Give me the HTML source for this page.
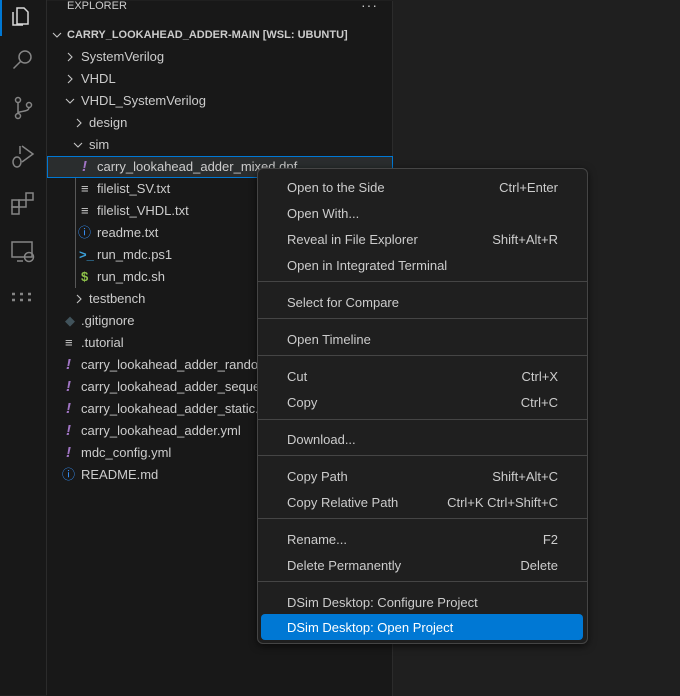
<!DOCTYPE html>
<html><head><meta charset="utf-8"><style>
*{margin:0;padding:0;box-sizing:border-box}
body{width:680px;height:695px;background:#1f1f1f;font-family:"Liberation Sans","Segoe UI",sans-serif;font-size:13px;color:#cccccc;position:relative;overflow:hidden}
#act{position:absolute;left:0;top:0;width:47px;height:695px;background:#181818;border-right:1px solid #2b2b2b}
#side{position:absolute;left:47px;top:1px;width:346px;height:695px;background:#181818;border-right:1px solid #2b2b2b}
.r{position:absolute;height:22px;line-height:22px;white-space:nowrap;color:#cccccc}
.chev{position:absolute;width:10px;height:10px}
#menu{position:absolute;left:257px;top:168px;width:331px;height:476px;background:#1f1f1f;border:1px solid #454545;border-radius:6px;box-shadow:0 2px 8px rgba(0,0,0,.6)}
.mi{position:absolute;left:29px;right:29px;height:26px;line-height:26px;color:#cccccc;top:1px}
.mi span{position:absolute;right:0}
.sep{position:absolute;left:0;right:0;height:1px;background:#454545}
.y{color:#a074c4;font-weight:bold;font-style:italic;font-size:15px}
</style></head><body>
<svg width="0" height="0" style="position:absolute"><defs>
<symbol id="cr" viewBox="0 0 10 10"><path d="M3 1l4 4-4 4" fill="none" stroke="#c5c5c5" stroke-width="1.1"/></symbol>
<symbol id="cd" viewBox="0 0 10 10"><path d="M1 3l4 4 4-4" fill="none" stroke="#c5c5c5" stroke-width="1.1"/></symbol>
</defs></svg>
<div id="act">
<div style="position:absolute;left:0;top:0;width:2px;height:36px;background:#0078d4"></div>
<svg width="47" height="320" style="position:absolute;left:0;top:0" fill="none" stroke="#858585" stroke-width="1.5">
<g stroke="#d7d7d7"><path d="M17 8h7l4 4v12h-11z"/><path d="M13 12v13h10"/></g>
<circle cx="25" cy="57" r="6"/><path d="M20.5 61.5l-7 7"/>
<circle cx="18" cy="100" r="2.5"/><circle cx="18" cy="116" r="2.5"/><circle cx="29" cy="105" r="2.5"/><path d="M18 102.5v11M29 107.5c0 5-11 3-11 6"/>
<path d="M20 146v8M22 146l11 8-11 8"/><ellipse cx="17" cy="162" rx="4" ry="5"/>
<rect x="12" y="200" width="7" height="7"/><rect x="19" y="200" width="7" height="7"/><rect x="12" y="207" width="7" height="7"/><rect x="26" y="193" width="7" height="7"/>
<rect x="12" y="242" width="20" height="15"/><circle cx="29" cy="257" r="4.5"/><path d="M17 261h6"/>
<path d="M12 294h3M20 294h3M28 294h3M12 300h3M20 300h3M28 300h3" stroke-width="2.5"/>
</svg>
</div>
<div id="side">
<div class="r" style="left:20px;top:-6px;font-size:11px">EXPLORER</div>
<div class="r" style="left:314px;top:-7px;font-size:14px;letter-spacing:1px">···</div>
<svg class="chev" style="left:5px;top:29px"><use href="#cd"/></svg>
<div class="r" style="left:20px;top:23px;font-size:11px;font-weight:bold">CARRY_LOOKAHEAD_ADDER-MAIN [WSL: UBUNTU]</div>
<svg class="chev" style="left:18px;top:51px"><use href="#cr"/></svg><div class="r" style="left:34px;top:45px">SystemVerilog</div>
<svg class="chev" style="left:18px;top:73px"><use href="#cr"/></svg><div class="r" style="left:34px;top:67px">VHDL</div>
<svg class="chev" style="left:18px;top:95px"><use href="#cd"/></svg><div class="r" style="left:34px;top:89px">VHDL_SystemVerilog</div>
<svg class="chev" style="left:27px;top:117px"><use href="#cr"/></svg><div class="r" style="left:42px;top:111px">design</div>
<svg class="chev" style="left:26px;top:139px"><use href="#cd"/></svg><div class="r" style="left:42px;top:133px">sim</div>
<div style="position:absolute;left:28px;top:177px;width:1px;height:110px;background:#585858"></div>
<div style="position:absolute;left:0;top:155px;width:346px;height:22px;background:#2a2d2e;border:1px solid #0078d4"></div>
<div class="r y" style="left:35px;top:155px">!</div><div class="r" style="left:50px;top:155px">carry_lookahead_adder_mixed.dpf</div>
<div class="r" style="left:34px;top:177px">≡</div><div class="r" style="left:50px;top:177px">filelist_SV.txt</div>
<div class="r" style="left:34px;top:199px">≡</div><div class="r" style="left:50px;top:199px">filelist_VHDL.txt</div>
<div class="r" style="left:31px;top:221px;color:#3794ff">ⓘ</div><div class="r" style="left:50px;top:221px">readme.txt</div>
<div class="r" style="left:32px;top:243px;color:#3ca0d8;font-weight:bold">&gt;_</div><div class="r" style="left:50px;top:243px">run_mdc.ps1</div>
<div class="r" style="left:34px;top:265px;color:#8dc149;font-weight:bold">$</div><div class="r" style="left:50px;top:265px">run_mdc.sh</div>
<svg class="chev" style="left:27px;top:293px"><use href="#cr"/></svg><div class="r" style="left:42px;top:287px">testbench</div>
<div class="r" style="left:18px;top:309px;color:#41535b">◆</div><div class="r" style="left:34px;top:309px">.gitignore</div>
<div class="r" style="left:18px;top:331px">≡</div><div class="r" style="left:34px;top:331px">.tutorial</div>
<div class="r y" style="left:19px;top:353px">!</div><div class="r" style="left:34px;top:353px">carry_lookahead_adder_random.yml</div>
<div class="r y" style="left:19px;top:375px">!</div><div class="r" style="left:34px;top:375px">carry_lookahead_adder_sequence.yml</div>
<div class="r y" style="left:19px;top:397px">!</div><div class="r" style="left:34px;top:397px">carry_lookahead_adder_static.yml</div>
<div class="r y" style="left:19px;top:419px">!</div><div class="r" style="left:34px;top:419px">carry_lookahead_adder.yml</div>
<div class="r y" style="left:19px;top:441px">!</div><div class="r" style="left:34px;top:441px">mdc_config.yml</div>
<div class="r" style="left:15px;top:463px;color:#3794ff">ⓘ</div><div class="r" style="left:34px;top:463px">README.md</div>
</div>
<div id="menu">
<div class="mi" style="top:6px">Open to the Side<span>Ctrl+Enter</span></div>
<div class="mi" style="top:32px">Open With...</div>
<div class="mi" style="top:58px">Reveal in File Explorer<span>Shift+Alt+R</span></div>
<div class="mi" style="top:84px">Open in Integrated Terminal</div>
<div class="sep" style="top:112px"></div>
<div class="mi" style="top:121px">Select for Compare</div>
<div class="sep" style="top:149px"></div>
<div class="mi" style="top:158px">Open Timeline</div>
<div class="sep" style="top:186px"></div>
<div class="mi" style="top:195px">Cut<span>Ctrl+X</span></div>
<div class="mi" style="top:221px">Copy<span>Ctrl+C</span></div>
<div class="sep" style="top:250px"></div>
<div class="mi" style="top:258px">Download...</div>
<div class="sep" style="top:286px"></div>
<div class="mi" style="top:295px">Copy Path<span>Shift+Alt+C</span></div>
<div class="mi" style="top:321px">Copy Relative Path<span>Ctrl+K Ctrl+Shift+C</span></div>
<div class="sep" style="top:349px"></div>
<div class="mi" style="top:358px">Rename...<span>F2</span></div>
<div class="mi" style="top:384px">Delete Permanently<span>Delete</span></div>
<div class="sep" style="top:412px"></div>
<div class="mi" style="top:421px">DSim Desktop: Configure Project</div>
<div style="position:absolute;left:3px;top:445px;width:322px;height:26px;background:#0078d4;border-radius:4px"></div>
<div class="mi" style="top:446px;color:#fff">DSim Desktop: Open Project</div>
</div>
</body></html>
